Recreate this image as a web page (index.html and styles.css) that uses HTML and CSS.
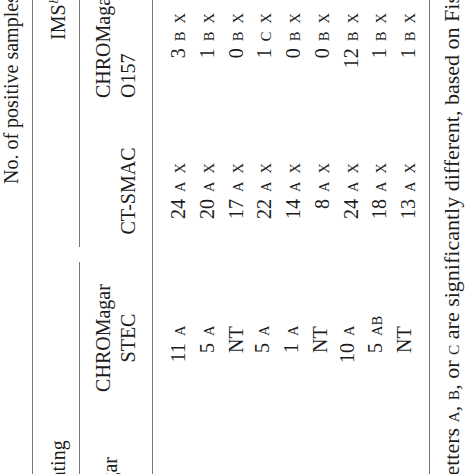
FILE: index.html
```html
<!DOCTYPE html>
<html>
<head>
<meta charset="utf-8">
<link rel="stylesheet" href="styles.css">
</head>
<body>
<div class="viewport">
  <div class="sheet">
    <div class="table">
      <div class="cell r1"><span>No. of positive samples</span></div>

      <div class="cell r2 grp-left"><span>Plating</span></div>
      <div class="cell r2 gapcol"></div>
      <div class="cell r2 grp-right">IMS<sup>b</sup></div>

      <div class="cell hd hd0"><span>agar</span></div>
      <div class="cell hd hd-stec">CHROMagar<br>STEC</div>
      <div class="cell hd gapcol"></div>
      <div class="cell hd hd-ct">CT-SMAC</div>
      <div class="cell hd hd-o157">CHROMagar<br>O157</div>

      <div class="cell data col0"></div>
      <div class="cell data stec">
        <div class="ln"><span class="n">11</span><span class="sc">A</span></div>
        <div class="ln"><span class="n">5</span><span class="sc">A</span></div>
        <div class="ln"><span class="nt">NT</span></div>
        <div class="ln"><span class="n">5</span><span class="sc">A</span></div>
        <div class="ln"><span class="n">1</span><span class="sc">A</span></div>
        <div class="ln"><span class="nt">NT</span></div>
        <div class="ln"><span class="n">10</span><span class="sc">A</span></div>
        <div class="ln"><span class="n">5</span><span class="sc">AB</span></div>
        <div class="ln"><span class="nt">NT</span></div>
      </div>
      <div class="cell data gapcol"></div>
      <div class="cell data ct">
        <div class="ln">24<span class="sc">A</span><span class="sc x">X</span></div>
        <div class="ln">20<span class="sc">A</span><span class="sc x">X</span></div>
        <div class="ln">17<span class="sc">A</span><span class="sc x">X</span></div>
        <div class="ln">22<span class="sc">A</span><span class="sc x">X</span></div>
        <div class="ln">14<span class="sc">A</span><span class="sc x">X</span></div>
        <div class="ln">8<span class="sc">A</span><span class="sc x">X</span></div>
        <div class="ln">24<span class="sc">A</span><span class="sc x">X</span></div>
        <div class="ln">18<span class="sc">A</span><span class="sc x">X</span></div>
        <div class="ln">13<span class="sc">A</span><span class="sc x">X</span></div>
      </div>
      <div class="cell data o157">
        <div class="ln">3<span class="sc">B</span><span class="sc x">X</span></div>
        <div class="ln">1<span class="sc">B</span><span class="sc x">X</span></div>
        <div class="ln">0<span class="sc">B</span><span class="sc x">X</span></div>
        <div class="ln">1<span class="sc">C</span><span class="sc x">X</span></div>
        <div class="ln">0<span class="sc">B</span><span class="sc x">X</span></div>
        <div class="ln">0<span class="sc">B</span><span class="sc x">X</span></div>
        <div class="ln">12<span class="sc">B</span><span class="sc x">X</span></div>
        <div class="ln">1<span class="sc">B</span><span class="sc x">X</span></div>
        <div class="ln">1<span class="sc">B</span><span class="sc x">X</span></div>
      </div>

      <div class="cell foot">Letters <span class="fsc">A</span>, <span class="fsc">B</span>, or <span class="fsc">C</span> are significantly different, based on Fisher's exact test</div>
    </div>
  </div>
</div>
</body>
</html>
```

FILE: styles.css
```css
html, body {
  margin: 0;
  padding: 0;
  background: #ffffff;
}

.viewport {
  width: 474px;
  height: 474px;
  overflow: hidden;
  background: #ffffff;
}

.sheet {
  width: 474px;
  height: 474px;
  overflow: hidden;
  transform: rotate(-90deg);
  transform-origin: 50% 50%;
  font-family: "Liberation Serif", "Times New Roman", serif;
  color: #1c1c1c;
  font-size: 20px;
}

.table {
  display: grid;
  grid-template-columns: 160px 152px 15px 112px 150px;
  margin-left: -100px;
  width: 589px;
}

.cell {
  white-space: nowrap;
}

.r1 {
  grid-column: 1 / -1;
  line-height: 20px;
  padding: 1px 0 11px 390px;
  border-bottom: 1px solid #7a7a7a;
}

.r2 {
  line-height: 20px;
  padding-top: 15px;
  padding-bottom: 11px;
}

.grp-left {
  grid-column: 1 / 3;
  border-bottom: 1px solid #7a7a7a;
  padding-left: 77px;
}

.r2.gapcol {
  grid-column: 3 / 4;
}

.grp-right {
  grid-column: 4 / 6;
  border-bottom: 1px solid #7a7a7a;
  padding-left: 207px;
}

.grp-right sup {
  font-size: 13px;
  font-style: italic;
  line-height: 0;
  vertical-align: 7px;
  margin-left: 1px;
}

.hd {
  line-height: 25px;
  padding-top: 11px;
  padding-bottom: 11px;
  border-bottom: 1px solid #7a7a7a;
}

.hd0 {
  text-align: right;
  padding-right: 43px;
  padding-top: 18px;
}

.hd-stec {
  text-align: center;
}

.hd-ct {
  text-align: center;
  display: flex;
  align-items: flex-end;
  justify-content: center;
}

.hd-o157 {
  text-align: left;
  padding-left: 37px;
}

.data {
  line-height: 26.75px;
  padding-top: 12px;
  padding-bottom: 5px;
  border-bottom: 1px solid #7a7a7a;
  display: flex;
  flex-direction: column;
}

.stec {
  padding-left: 51px;
}

.stec .n {
  display: inline-block;
  width: 20px;
  text-align: right;
}

.stec .nt {
  margin-left: 10px;
}

.ct,
.o157 {
  text-align: right;
  padding-right: 28px;
}

.sc {
  font-size: 14.5px;
  margin-left: 7px;
}

.sc.x {
  margin-left: 8px;
}

.foot {
  grid-column: 1 / -1;
  font-size: 22px;
  line-height: 24px;
  padding-top: 10px;
  padding-left: 85px;
}

.fsc {
  font-size: 15.5px;
}
```
